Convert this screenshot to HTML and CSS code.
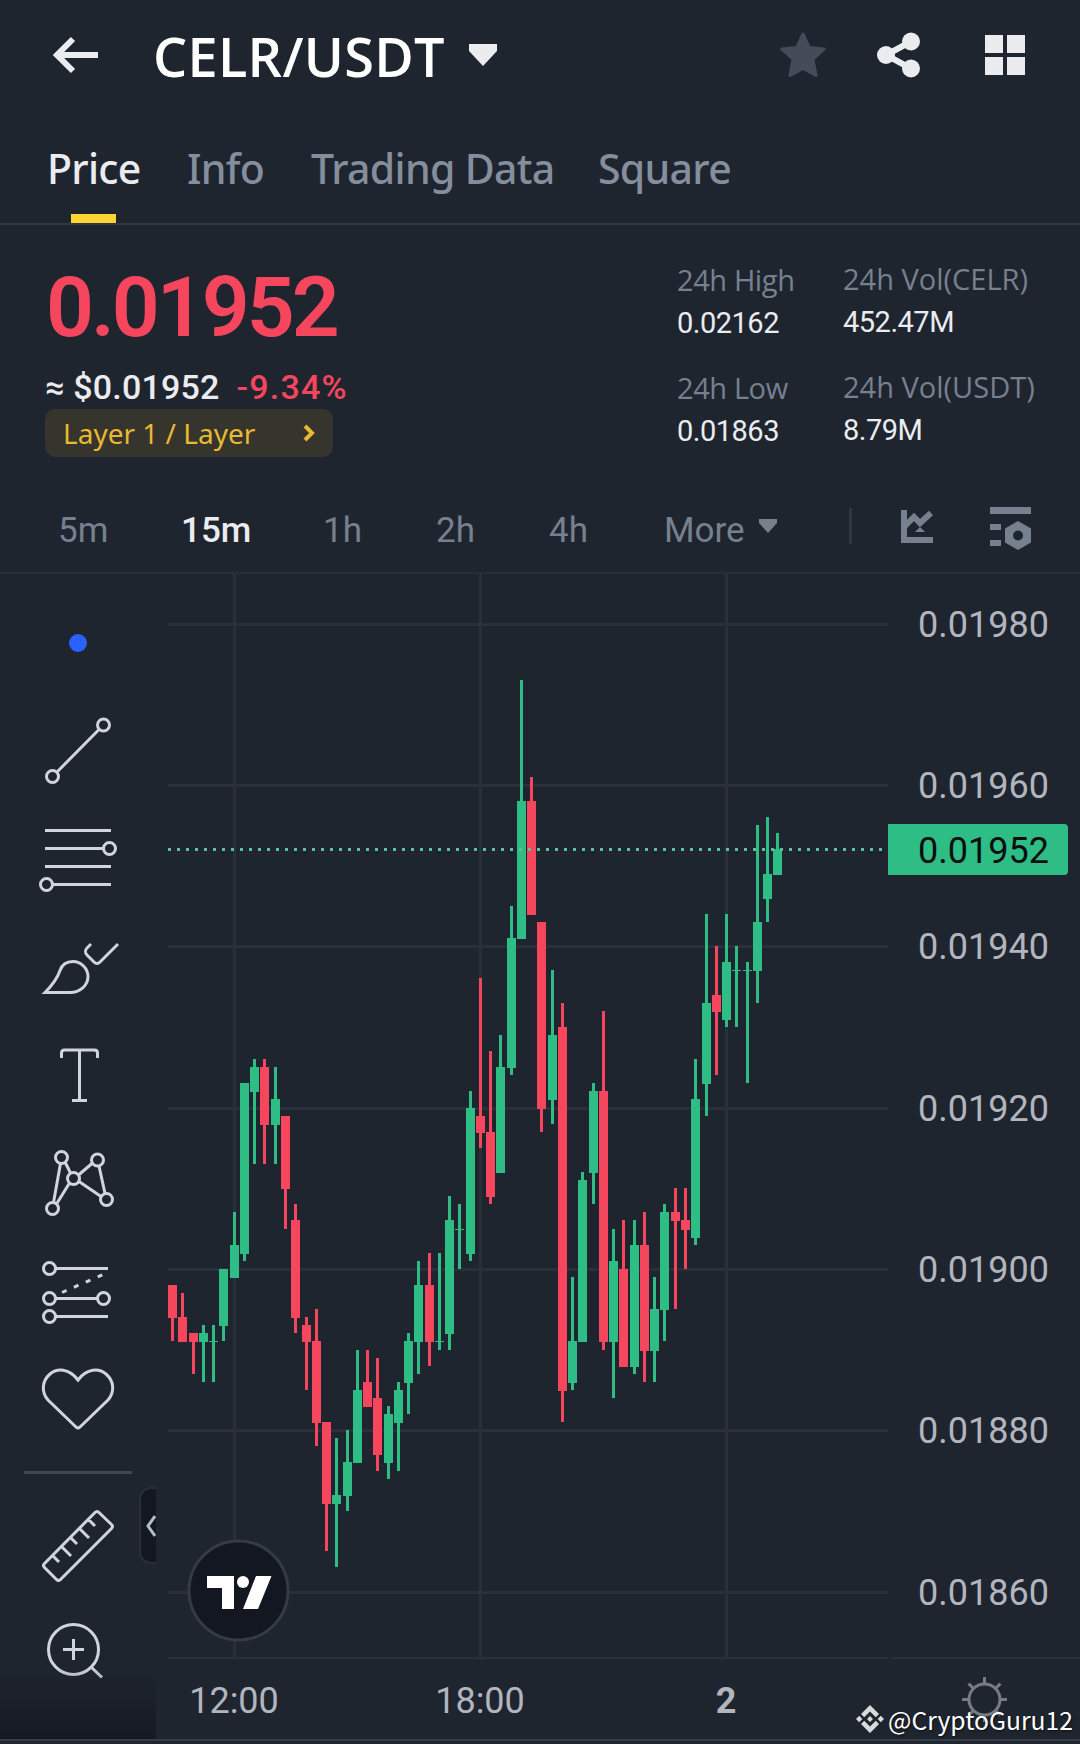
FILE: index.html
```
<!DOCTYPE html>
<html lang="en">
<head>
  <meta charset="UTF-8">
  <meta name="viewport" content="width=device-width, initial-scale=1.0">
  <title>CELR/USDT</title>
  <link rel="stylesheet" href="styles.css">
</head>
<body>
  <header class="topbar">
    <svg class="back" width="46" height="40" viewBox="0 0 46 40"><path d="M21 4 5 20l16 16M5 20h41" /></svg>
    <h1>CELR/USDT</h1>
    <svg class="caret" width="28" height="22" viewBox="0 0 28 22"><path d="M0 0h28v7L14 22 0 7z" /></svg>
    <div class="actions">
      <svg class="star" width="48" height="48" viewBox="0 0 48 48"><path d="M24 3l6.200 13.500 15 1.600-11.300 10.100 3.200 16.300L24 37.500 10.900 44.500l3.200-16.300L2.800 18.100l15-1.600z" /></svg>
      <svg class="share" width="44" height="48" viewBox="0 0 44 48"><path d="M35 10.500 10 24l25 13.500" /><circle cx="35" cy="10.500" r="9" /><circle cx="10" cy="24" r="9" /><circle cx="35" cy="37.500" r="9" /></svg>
      <svg class="apps" width="40" height="40" viewBox="0 0 40 40"><path d="M0 0h18v18H0zM22 0h18v18H22zM0 22h18v18H0zM22 22h18v18H22z" /></svg>
    </div>
  </header>

  <nav class="tabs">
    <a class="tab active">Price</a>
    <a class="tab">Info</a>
    <a class="tab">Trading Data</a>
    <a class="tab">Square</a>
  </nav>

  <section class="summary">
    <div class="quote">
      <div class="price">0.01952</div>
      <div class="fiat"><span>≈ $0.01952</span><span class="change">-9.34%</span></div>
      <div class="tag">
        <span>Layer 1 / Layer</span>
        <svg width="12" height="18" viewBox="0 0 12 18"><path d="M2 2l7 7-7 7" /></svg>
      </div>
    </div>
    <dl class="stats">
      <div><dt>24h High</dt><dd>0.02162</dd></div>
      <div class="vol"><dt>24h Vol(CELR)</dt><dd>452.47M</dd></div>
      <div><dt>24h Low</dt><dd>0.01863</dd></div>
      <div class="vol"><dt>24h Vol(USDT)</dt><dd>8.79M</dd></div>
    </dl>
  </section>

  <div class="intervals">
    <span>5m</span>
    <span class="active">15m</span>
    <span>1h</span>
    <span>2h</span>
    <span>4h</span>
    <span class="more">More <svg width="18" height="14" viewBox="0 0 18 14"><path d="M0 0h18v4L9 14 0 4z" /></svg></span>
    <i class="divider"></i>
    <svg class="indicator" width="32" height="33" viewBox="0 0 32 33"><path class="stroke" d="M3 0v30h29M4 16l9-9 6 6L30 3" /><path d="M19 17l5 5H14z" /></svg>
    <svg class="settings" width="41" height="44" viewBox="0 0 41 44"><path d="M0 0h41v7H0zM0 17h11v6H0zM0 33h11v6H0z" /><path fill-rule="evenodd" d="M28 14l13 7.500v14L28 43l-13-7.500v-14zM28 23.500a5 5 0 1 0 .1 0z" /></svg>
  </div>

  <main class="chart">
    <aside class="tools">
      <svg viewBox="0 0 156 108"><circle class="dot" cx="78" cy="54" r="9" /></svg>
      <svg viewBox="0 0 156 108"><path d="M57 75 99 32.500" /><circle cx="52.500" cy="79.500" r="6" /><circle cx="103.500" cy="28" r="6" /></svg>
      <svg viewBox="0 0 156 108"><path d="M45 25.500h66M45 43.500h58M45 61.500h66M53 79.500h58" /><circle cx="109.500" cy="43.500" r="6" /><circle cx="46.500" cy="79.500" r="6" /></svg>
      <svg viewBox="0 0 156 108"><path d="M45 79.500h25c10 0 18-7 18-16 0-8-7-15-15-15-6 0-11 3-13 9-3 9-8 15-15 22zM91 31l-4 4c-2 2-2 5 0 7l7 7c2 2 4 2 6 0l18-18" /></svg>
      <svg viewBox="0 0 156 108"><path d="M61.500 37v-5q0-3 3-3h30q3 0 3 3v5M79.500 29v50.500M72 79.500h15" /></svg>
      <svg viewBox="0 0 156 108"><path d="M65 33l5.500 11M60.500 34.500l-7 39M56.500 75 69.500 54M78.500 46l13.500-11.500M99 37l6 27.500M79 52.500l22 15" /><circle cx="61.500" cy="28.500" r="6" /><circle cx="97.500" cy="31" r="6" /><circle cx="73.500" cy="49.500" r="6" /><circle cx="106.500" cy="70.500" r="6" /><circle cx="52.500" cy="79.500" r="6" /></svg>
      <svg viewBox="0 0 156 108"><path d="M56 31.500h52M56 61.500h41M56 79.500h52" /><path stroke-dasharray="5 8" d="M62 55.500 104 37" /><circle cx="49.500" cy="31.500" r="6" /><circle cx="49.500" cy="61.500" r="6" /><circle cx="103.500" cy="61.500" r="6" /><circle cx="49.500" cy="79.500" r="6" /></svg>
      <svg viewBox="0 0 156 108"><path d="M78 35C69 23 57 23 50 29c-8 7-9 18-2 26l28 27q2 2 4 0l28-27c7-8 6-19-2-26-7-6-19-6-28 6z" /></svg>
      <hr>
      <svg viewBox="0 0 156 108"><path d="M95 20.500q2-2 4 0l12.500 12q2 2 0 4L60.500 87.500q-2 2-4 0L44.500 75.500q-2-2 0-4zM88 27l7 7M79 36l10 10M70 45l7 7M61 54l10 10M52 63l7 7" /></svg>
      <svg viewBox="0 0 156 108"><circle cx="73.500" cy="49.500" r="25" /><path d="M63 49.500h21M73.500 39v21M91 67l11 10.500" /></svg>
      <div class="collapse"><svg width="12" height="24" viewBox="0 0 12 24"><path d="M10 2 3 12l7 10" /></svg></div>
      <div class="fade"></div>
    </aside>
    <svg id="plot" class="plot" width="912" height="1165" viewBox="168 574 912 1165"></svg>
    <div class="watermark">
      <svg width="28" height="28" viewBox="0 0 28 28"><path d="M14 0l9 9-3.200 3.200L14 6.400l-5.800 5.800L5 9zM14 28l9-9-3.200-3.200L14 21.600l-5.800-5.800L5 19zM14 11l3 3-3 3-3-3zM3.200 10.800l3.200 3.200-3.200 3.200L0 14zM24.800 10.800 28 14l-3.200 3.200-3.200-3.200z" /></svg>
      <span>@CryptoGuru12</span>
    </div>
  </main>
  <script src="chart.js"></script>
</body>
</html>
```
FILE: styles.css
```
* {
  box-sizing: border-box;
}

body {
  margin: 0;
  width: 1080px;
  height: 1744px;
  overflow: hidden;
  background: #1f252f;
  color: #eaecef;
  font-family: 'Open Sans', 'Noto Sans', sans-serif;
}

svg {
  display: block;
  flex: none;
}

/* top bar */
.topbar {
  display: flex;
  align-items: center;
  height: 110px;
  padding: 0 55px 0 52px;
  fill: #eaecef;
}

.back {
  fill: none;
  stroke: #eaecef;
  stroke-width: 6;
}

.topbar h1 {
  width: 316px;
  margin: 2px 0 0 55px;
  font-size: 54px;
  font-weight: 600;
  line-height: 108px;
  letter-spacing: 0.3px;
  color: #fff;
}

.actions {
  display: flex;
  align-items: center;
  margin-left: auto;
}

.star {
  margin-right: 49px;
  fill: #444c5a;
  stroke: #444c5a;
  stroke-width: 3;
  stroke-linejoin: round;
}

.share {
  margin-right: 65px;
}

.share path {
  fill: none;
  stroke: #eaecef;
  stroke-width: 6;
}

/* tabs */
.tabs {
  display: grid;
  grid-template-columns: 140px 124px 287px 1fr;
  height: 115px;
  padding-left: 47px;
  border-bottom: 2px solid #2f3640;
  font-family: 'Noto Sans', sans-serif;
  font-size: 41px;
  font-weight: 500;
  line-height: 116px;
  letter-spacing: -0.7px;
  color: #848e9c;
  white-space: nowrap;
}

.tab.active {
  display: flex;
  flex-direction: column;
  color: #eaecef;
}

.tab.active::after {
  content: '';
  width: 45px;
  height: 9px;
  margin: -12px 0 0 24px;
  background: #fcd535;
}

/* price summary */
.summary {
  display: flex;
  height: 260px;
  padding: 33px 0 0 45px;
}

.quote {
  width: 632px;
  padding-top: 5px;
  font-family: Roboto, sans-serif;
}

.price {
  padding-left: 1px;
  font-size: 84px;
  font-weight: 600;
  line-height: 90px;
  letter-spacing: -3px;
  color: #f6465d;
}

.fiat {
  display: flex;
  gap: 17px;
  margin-top: 12px;
  font-size: 34px;
  font-weight: 500;
  line-height: 44px;
  letter-spacing: 0.2px;
}

.change {
  color: #f6465d;
  letter-spacing: 1.2px;
}

.tag {
  display: flex;
  align-items: center;
  justify-content: space-between;
  width: 288px;
  height: 48px;
  padding: 0 18px 0 18px;
  border-radius: 10px;
  background: #35342d;
  color: #e8b931;
  font-family: 'Noto Sans', sans-serif;
  font-size: 28px;
}

.tag path {
  fill: none;
  stroke: #e8b931;
  stroke-width: 4;
}

.stats {
  display: grid;
  grid-template-columns: 166px 1fr;
  grid-template-rows: 86px 86px;
  row-gap: 22px;
  flex: 1;
  margin: 0;
  font-size: 29px;
  line-height: 43px;
  white-space: nowrap;
}

.stats .vol {
  margin-top: -1px;
}

.stats dt {
  color: #76808f;
  letter-spacing: -0.4px;
}

.stats .vol dt {
  letter-spacing: 0;
}

.stats dd {
  margin: 0;
  padding-top: 1px;
  font-family: Roboto, sans-serif;
  letter-spacing: -0.5px;
}

/* interval row */
.intervals {
  display: grid;
  grid-template-columns: 123px 142px 113px 113px 115px 185px 52px 89px 1fr;
  align-items: center;
  height: 89px;
  padding-left: 58px;
  border-bottom: 2px solid #272d37;
  font-family: Roboto, sans-serif;
  font-size: 35px;
  color: #76808f;
  fill: #76808f;
}

.intervals span {
  padding-top: 4px;
}

.intervals .active {
  color: #eaecef;
  font-weight: 500;
}

.more {
  display: flex;
  align-items: center;
  gap: 14px;
}

.more svg {
  margin-top: -10px;
}

.divider {
  width: 3px;
  height: 36px;
  margin-top: -6px;
  background: #2f3640;
}

.indicator {
  margin-top: -4px;
}

.indicator .stroke {
  fill: none;
  stroke: #76808f;
  stroke-width: 6;
}

/* chart */
.chart {
  position: relative;
  display: flex;
  height: 1167px;
  border-bottom: 2px solid #363c47;
}

.tools {
  position: relative;
  width: 168px;
  padding-top: 15px;
  overflow: hidden;
}

.tools > svg {
  width: 156px;
  height: 108px;
  fill: none;
  stroke: #d1d4dc;
  stroke-width: 3;
}

.tools .dot {
  fill: #2962ff;
  stroke: none;
}

.tools hr {
  width: 108px;
  height: 3px;
  margin: 18px 0 18px 24px;
  border: 0;
  background: #434651;
}

.collapse {
  position: absolute;
  top: 913px;
  left: 139px;
  width: 17px;
  height: 77px;
  padding: 25px 0 0 4px;
  border: 2px solid #2a2e39;
  border-right: 0;
  border-radius: 12px 0 0 12px;
  background: #131722;
  overflow: hidden;
}

.collapse path {
  fill: none;
  stroke: #b2bfc6;
  stroke-width: 3;
}

.fade {
  position: absolute;
  left: 0;
  bottom: 0;
  width: 156px;
  height: 72px;
  background: linear-gradient(transparent, #151924);
}

.plot {
  font-family: Roboto, sans-serif;
  font-size: 36px;
  fill: #b2b5be;
}

.grid {
  fill: #2a2f39;
}

.up {
  fill: #2ebd85;
}

.down {
  fill: #f6465d;
}

.last-line {
  stroke: #5fbf9b;
  stroke-width: 3;
  stroke-dasharray: 3 6;
}

.last-text {
  fill: #0b0e11;
}

.day {
  font-weight: 700;
}

.gear {
  fill: none;
  stroke: #787b86;
  stroke-width: 3;
}

.badge {
  fill: #131722;
  stroke: #363a45;
  stroke-width: 3;
}

.badge-mark {
  fill: #fff;
}

.watermark {
  position: absolute;
  right: 7px;
  bottom: 1px;
  display: flex;
  align-items: center;
  gap: 4px;
  height: 38px;
  color: #fff;
  fill: #d9dadc;
  font-family: 'Noto Sans CJK SC', sans-serif;
  font-size: 24.7px;
  line-height: 38px;
  text-shadow: 1px 1px 2px rgba(0, 0, 0, 0.6);
}
```
FILE: chart.js
```
// open, high, low, close in 0.00001 USDT
const candles = [
  [1898, 1898, 1891, 1894], [1894, 1897, 1891, 1891], [1892, 1892, 1887, 1891],
  [1891, 1893, 1886, 1892], [1891, 1893, 1886, 1891], [1893, 1900, 1891, 1900],
  [1899, 1907, 1899, 1903], [1902, 1923, 1901, 1923], [1922, 1926, 1913, 1925],
  [1925, 1926, 1913, 1918], [1918, 1925, 1913, 1921], [1919, 1919, 1905, 1910],
  [1906, 1908, 1892, 1894], [1893, 1894, 1885, 1891], [1891, 1895, 1878, 1881],
  [1881, 1881, 1865, 1871], [1871, 1879, 1863, 1872], [1872, 1880, 1870, 1876],
  [1876, 1890, 1876, 1885], [1886, 1890, 1883, 1883], [1884, 1889, 1875, 1877],
  [1876, 1883, 1874, 1882], [1881, 1886, 1875, 1885], [1886, 1892, 1882, 1891],
  [1891, 1901, 1887, 1898], [1898, 1902, 1888, 1891], [1891, 1902, 1890, 1891],
  [1892, 1909, 1890, 1906], [1905, 1908, 1900, 1905], [1902, 1922, 1901, 1920],
  [1919, 1936, 1915, 1917], [1917, 1927, 1908, 1909], [1912, 1929, 1912, 1925],
  [1925, 1945, 1924, 1941], [1941, 1973, 1941, 1958], [1958, 1961, 1944, 1944],
  [1943, 1943, 1917, 1920], [1921, 1937, 1918, 1929], [1930, 1933, 1881, 1885],
  [1886, 1899, 1885, 1891], [1891, 1912, 1891, 1911], [1912, 1923, 1908, 1922],
  [1922, 1932, 1890, 1891], [1891, 1905, 1884, 1901], [1900, 1906, 1888, 1888],
  [1888, 1906, 1887, 1903], [1903, 1907, 1886, 1890], [1890, 1899, 1886, 1895],
  [1895, 1908, 1891, 1907], [1907, 1910, 1895, 1906], [1906, 1910, 1900, 1905],
  [1904, 1926, 1903, 1921], [1923, 1944, 1919, 1933], [1934, 1940, 1924, 1932],
  [1931, 1944, 1930, 1938], [1937, 1940, 1930, 1937], [1937, 1938, 1923, 1937],
  [1937, 1955, 1933, 1943], [1946, 1956, 1943, 1949], [1949, 1954, 1949, 1952]
];

const y = p => Math.round(623.5 + (1980 - p) * 8.067);
const x = i => Math.floor(172.68 + i * 10.2565);
const rect = (cls, x, y, w, h) => `<rect class="${cls}" x="${x}" y="${y}" width="${w}" height="${h}"/>`;

let out = '';

// grid and price scale
for (let p = 1980; p >= 1860; p -= 20) {
  out += rect('grid', 168, y(p) - 1, 720, 3);
  out += `<text x="918" y="${y(p) + 13}">0.0${p}</text>`;
}
[[6, '12:00', ''], [30, '18:00', ''], [54, '2', 'day']].forEach(([i, label, cls]) => {
  out += rect('grid', x(i) - 1, 574, 3, 1083);
  out += `<text class="${cls}" x="${x(i)}" y="1713" text-anchor="middle">${label}</text>`;
});
out += rect('grid', 168, 1657, 720, 2) + rect('grid', 891, 1657, 189, 2);

// candles
candles.forEach(([o, h, l, c], i) => {
  const cls = c >= o ? 'up' : 'down';
  const top = y(Math.max(o, c));
  const height = o === c ? 1 : y(Math.min(o, c)) - top + 1;
  out += rect(cls, x(i) - 1, y(h), 3, y(l) - y(h));
  out += rect(cls, x(i) - 4, top, 9, height);
});

// last price
out += '<path class="last-line" d="M168 849.500h718"/>';
out += '<path class="up" d="M888 824h176q4 0 4 4v43q0 4-4 4H888z"/>';
out += '<text class="last-text" x="918" y="863">0.01952</text>';

// scale settings
out += '<g class="gear"><circle cx="984.500" cy="1699.500" r="15.500"/>';
for (let a = 0; a < 360; a += 45) {
  out += `<path d="M984.500 1684v-7" transform="rotate(${a} 984.500 1699.500)"/>`;
}
out += '</g>';

// chart logo
out += '<circle class="badge" cx="238.500" cy="1590.500" r="49.500"/>';
out += '<path class="badge-mark" d="M207 1576h27v33h-12v-21h-15zM256 1576h15.500L258 1609h-15z"/>';
out += '<circle class="badge-mark" cx="243" cy="1582" r="6"/>';

document.getElementById('plot').innerHTML = out;
```
